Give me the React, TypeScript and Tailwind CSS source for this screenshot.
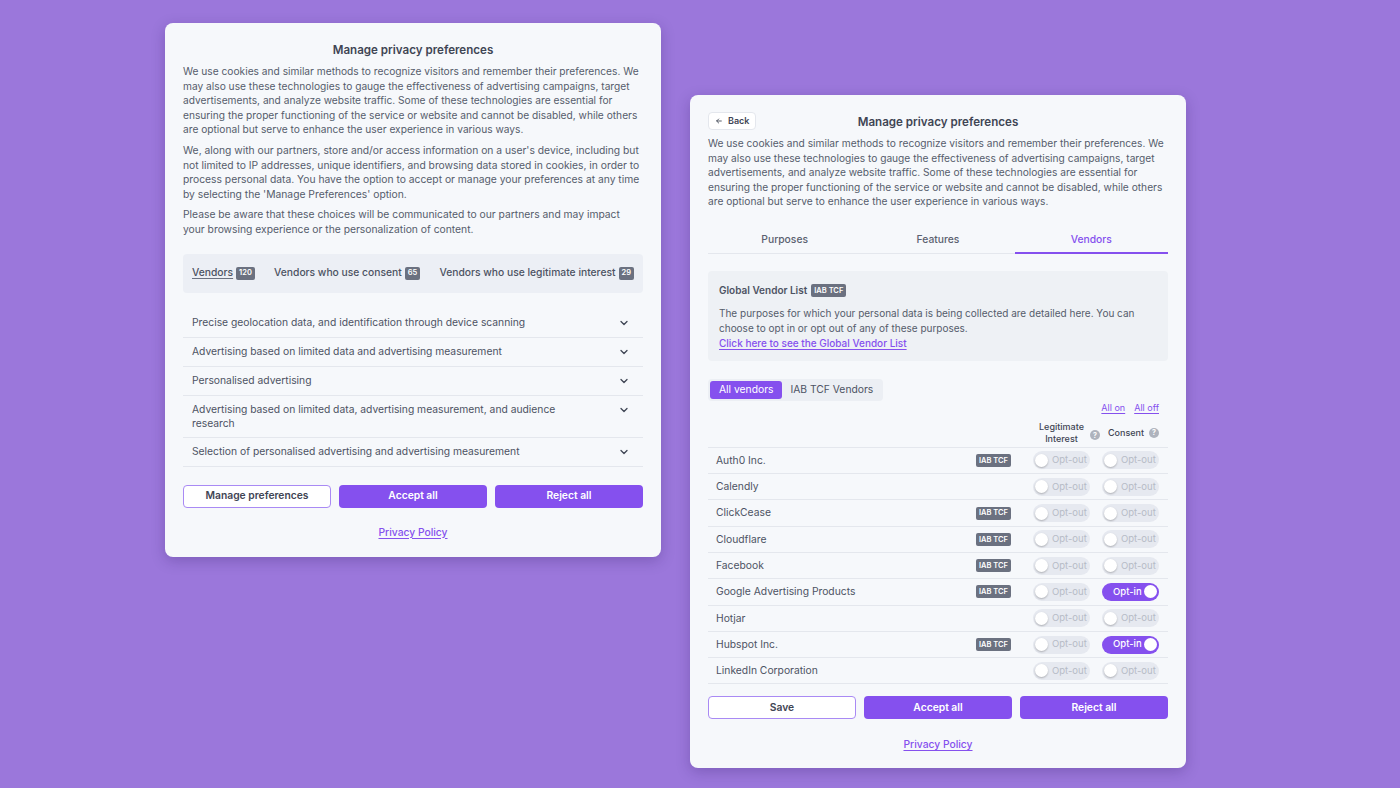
import React from "react";

const intro =
  "We use cookies and similar methods to recognize visitors and remember their preferences. We may also use these technologies to gauge the effectiveness of advertising campaigns, target advertisements, and analyze website traffic. Some of these technologies are essential for ensuring the proper functioning of the service or website and cannot be disabled, while others are optional but serve to enhance the user experience in various ways.";

const purposes = [
  "Precise geolocation data, and identification through device scanning",
  "Advertising based on limited data and advertising measurement",
  "Personalised advertising",
  "Advertising based on limited data, advertising measurement, and audience research",
  "Selection of personalised advertising and advertising measurement",
];

const vendors = [
  { name: "Auth0 Inc.", iab: true, consent: false },
  { name: "Calendly", iab: false, consent: false },
  { name: "ClickCease", iab: true, consent: false },
  { name: "Cloudflare", iab: true, consent: false },
  { name: "Facebook", iab: true, consent: false },
  { name: "Google Advertising Products", iab: true, consent: true },
  { name: "Hotjar", iab: false, consent: false },
  { name: "Hubspot Inc.", iab: true, consent: true },
  { name: "LinkedIn Corporation", iab: false, consent: false },
];

function Chevron() {
  return (
    <svg width="12" height="12" viewBox="0 0 24 24" fill="none" stroke="#3f4554" strokeWidth="2.6" strokeLinecap="round" strokeLinejoin="round">
      <path d="M6 9l6 6 6-6" />
    </svg>
  );
}

function Badge({ children }: { children: React.ReactNode }) {
  return (
    <span className="inline-flex items-center whitespace-nowrap h-[13px] px-[3px] rounded-[2px] bg-[#6b7180] text-white text-[7.5px] font-semibold leading-none">
      {children}
    </span>
  );
}

function Help() {
  return (
    <span className="inline-flex items-center justify-center w-[10px] h-[10px] rounded-full bg-[#aeb3bd] text-white text-[7px] font-bold leading-none">
      ?
    </span>
  );
}

function Toggle({ on }: { on: boolean }) {
  if (on) {
    return (
      <div className="w-[57px] h-[18px] rounded-full bg-[#8550ee] flex items-center justify-between pl-[11px] pr-[2px]">
        <span className="text-[9.5px] text-white font-medium">Opt-in</span>
        <span className="w-[13px] h-[13px] rounded-full bg-white" />
      </div>
    );
  }
  return (
    <div className="w-[57px] h-[18px] rounded-full bg-[#e6e9f0] flex items-center pl-[2px] gap-[4px]">
      <span className="w-[13px] h-[13px] rounded-full bg-white shadow-[0_1px_2px_rgba(0,0,0,0.25)]" />
      <span className="text-[9.5px] text-[#b6bbc6]">Opt-out</span>
    </div>
  );
}

function Buttons({ first }: { first: string }) {
  return (
    <div className="grid grid-cols-3 gap-[8px]">
      <button className="h-[23px] rounded-[4px] border border-[#a98af4] bg-white text-[10.3px] font-semibold text-[#3f4554]">
        {first}
      </button>
      <button className="h-[23px] rounded-[4px] bg-[#8550ee] text-[10.3px] font-semibold text-white">Accept all</button>
      <button className="h-[23px] rounded-[4px] bg-[#8550ee] text-[10.3px] font-semibold text-white">Reject all</button>
    </div>
  );
}

function Policy() {
  return (
    <div className="text-center leading-[14px]">
      <a className="text-[10.3px] font-medium text-[#8550ee] underline underline-offset-2">Privacy Policy</a>
    </div>
  );
}

function LeftCard() {
  return (
    <div className="w-[496px] bg-[#f6f8fb] rounded-[8px] shadow-[0_4px_14px_rgba(40,20,90,0.25)] px-[18px] pt-[19px] pb-[18px]">
      <h2 className="text-center text-[11.6px] font-semibold text-[#3f4554] leading-[16px]">Manage privacy preferences</h2>
      <div className="mt-[6px] text-[10.3px] leading-[14.6px] text-[#555c6b] flex flex-col gap-[6px]">
        <p className="text-[10.2px]">{intro}</p>
        <p>
          We, along with our partners, store and/or access information on a user's device, including but not limited to IP addresses, unique identifiers, and browsing data stored in cookies, in order to process personal data. You have the option to accept or manage your preferences at any time by selecting the 'Manage Preferences' option.
        </p>
        <p>Please be aware that these choices will be communicated to our partners and may impact your browsing experience or the personalization of content.</p>
      </div>
      <div className="mt-[17px] h-[39px] rounded-[4px] bg-[#eceff5] flex items-center justify-between px-[9px] text-[10.3px] font-medium text-[#4d5363]">
        <span className="flex items-center gap-[3px]">
          <span className="underline underline-offset-2 decoration-[#6b7180]">Vendors</span>
          <Badge>120</Badge>
        </span>
        <span className="flex items-center gap-[3px]">
          Vendors who use consent <Badge>65</Badge>
        </span>
        <span className="flex items-center gap-[3px]">
          Vendors who use legitimate interest <Badge>29</Badge>
        </span>
      </div>
      <div className="mt-[16px]">
        {purposes.map((p) => (
          <div key={p} className="flex items-start justify-between border-b border-[#e4e7ed] px-[9px] py-[6.5px] min-h-[29px]">
            <span className="text-[10.3px] leading-[14px] text-[#4d5363] max-w-[380px]">{p}</span>
            <span className="pt-[2px] pr-[4px]">
              <Chevron />
            </span>
          </div>
        ))}
      </div>
      <div className="mt-[18px]">
        <Buttons first="Manage preferences" />
      </div>
      <div className="mt-[15px]">
        <Policy />
      </div>
    </div>
  );
}

function RightCard() {
  return (
    <div className="w-[496px] bg-[#f6f8fb] rounded-[8px] shadow-[0_4px_14px_rgba(40,20,90,0.25)] px-[18px] pt-[17px] pb-[17px]">
      <div className="relative flex items-center justify-center h-[18px]">
        <button className="absolute left-0 top-0 h-[18px] px-[6px] flex items-center gap-[5px] rounded-[4px] border border-[#e4e7ed] bg-white text-[9px] font-semibold text-[#3f4554]">
          <svg width="8" height="8" viewBox="0 0 24 24" fill="none" stroke="#3f4554" strokeWidth="2.6" strokeLinecap="round" strokeLinejoin="round">
            <path d="M19 12H5M11 6l-6 6 6 6" />
          </svg>
          Back
        </button>
        <h2 className="text-[11.6px] font-semibold text-[#3f4554] leading-[16px] mt-[2px]">Manage privacy preferences</h2>
      </div>
      <p className="mt-[6px] text-[10.2px] leading-[14.6px] text-[#555c6b]">{intro}</p>
      <div className="mt-[23px] grid grid-cols-3 border-b border-[#e4e7ed] text-[10.3px] font-medium text-[#5b6170]">
        <div className="text-center pb-[6px]">Purposes</div>
        <div className="text-center pb-[6px]">Features</div>
        <div className="text-center pb-[5px] text-[#8550ee] border-b-2 border-[#8550ee] -mb-px">Vendors</div>
      </div>
      <div className="mt-[17px] rounded-[4px] bg-[#eef1f5] px-[11px] pt-[12px] pb-[10px]">
        <div className="flex items-center gap-[4px] text-[10px] font-semibold text-[#4d5363]">
          Global Vendor List <Badge>IAB TCF</Badge>
        </div>
        <p className="mt-[8px] text-[10px] leading-[14.8px] text-[#555c6b]">
          The purposes for which your personal data is being collected are detailed here. You can choose to opt in or opt out of any of these purposes.
          <br />
          <a className="text-[#8550ee] font-medium underline underline-offset-2">Click here to see the Global Vendor List</a>
        </p>
      </div>
      <div className="mt-[18px] inline-flex items-center p-[2px] rounded-[4px] bg-[#eceff4] text-[10.3px]">
        <span className="px-[9px] h-[18px] flex items-center rounded-[3px] bg-[#8550ee] text-white">All vendors</span>
        <span className="px-[8px] h-[18px] flex items-center text-[#4d5363]">IAB TCF Vendors</span>
      </div>
      <div className="mt-[1px] flex justify-end gap-[9px] pr-[9px] text-[9px] text-[#8550ee] leading-[12px]">
        <a className="underline underline-offset-2">All on</a>
        <a className="underline underline-offset-2">All off</a>
      </div>
      <div className="mt-[7px] flex items-center justify-end border-b border-[#e4e7ed] pb-[2px] pr-[9px] text-[9px] font-medium text-[#3f4554]">
        <div className="relative w-[57px] flex justify-center">
          <span className="text-center leading-[12px]">
            Legitimate
            <br />
            Interest
          </span>
          <span className="absolute right-[-10px] top-[7px]">
            <Help />
          </span>
        </div>
        <div className="w-[57px] ml-[12px] flex items-center justify-end gap-[5px]">
          <span>Consent</span>
          <Help />
        </div>
      </div>
      <div>
        {vendors.map((v) => (
          <div key={v.name} className="h-[26.3px] flex items-center border-b border-[#e4e7ed] pl-[8px] pr-[9px]">
            <span className="flex-1 text-[10.3px] text-[#4d5363]">{v.name}</span>
            <span className="w-[33px] mr-[24px] flex">{v.iab && <Badge>IAB TCF</Badge>}</span>
            <Toggle on={false} />
            <span className="w-[12px]" />
            <Toggle on={v.consent} />
          </div>
        ))}
      </div>
      <div className="mt-[12px]">
        <Buttons first="Save" />
      </div>
      <div className="mt-[16px]">
        <Policy />
      </div>
    </div>
  );
}

export default function App() {
  return (
    <div
      className="w-[1400px] h-[788px] overflow-hidden bg-[#9b77db] flex items-start pl-[165px] pt-[23px] gap-[29px]"
      style={{ fontFamily: "Inter, 'Noto Sans', sans-serif" }}
    >
      <LeftCard />
      <div className="mt-[72px]">
        <RightCard />
      </div>
    </div>
  );
}
